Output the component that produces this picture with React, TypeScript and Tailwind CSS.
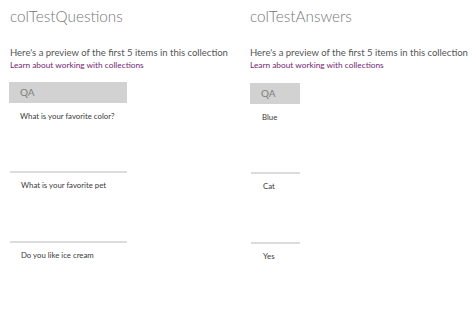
import React from "react";

const font = { fontFamily: 'Lato, "Noto Sans", sans-serif' };

function Gallery({
  items,
  width,
  textPad,
}: {
  items: string[];
  width: string;
  textPad: string;
}) {
  return (
    <div className={`flex flex-col shrink-0 ${width}`}>
      <div className="shrink-0 h-[21px] bg-[#d2d2d2] flex items-center pl-[11px] text-[10px] text-[#7f7f7f]">
        QA
      </div>
      {items.map((t, i) => (
        <div
          key={i}
          className={`shrink-0 whitespace-nowrap ${i === 0 ? "h-[68px] pt-[6px]" : "h-[70px] pt-[5px] border-t-2 border-[#dcdcdc] ml-[1px]"} ${textPad} text-[7.8px] leading-[14px] text-[#3a3a3a]`}
        >
          {t}
        </div>
      ))}
    </div>
  );
}

function Column({
  title,
  items,
  width,
  textPad,
  galleryPad,
}: {
  title: string;
  items: string[];
  width: string;
  textPad: string;
  galleryPad: string;
}) {
  return (
    <div className="flex flex-col">
      <div className="shrink-0 pt-[5px] h-[46px] text-[15.3px] leading-[22px] text-[#777777] font-light whitespace-nowrap">
        {title}
      </div>
      <div className="shrink-0 text-[9.5px] leading-[13px] text-[#555555] whitespace-nowrap">
        Here&apos;s a preview of the first 5 items in this collection
      </div>
      <div className="shrink-0 text-[8.3px] leading-[13px] text-[#742774] whitespace-nowrap">
        Learn about working with collections
      </div>
      <div className={`shrink-0 ${galleryPad}`}>
        <Gallery items={items} width={width} textPad={textPad} />
      </div>
    </div>
  );
}

export default function App() {
  return (
    <div className="w-[474px] h-[311px] bg-white flex overflow-hidden" style={font}>
      <div className="w-[240px] shrink-0 pl-[10px]">
        <Column
          title="colTestQuestions"
          items={["What is your favorite color?", "What is your favorite pet", "Do you like ice cream"]}
          width="w-[118px] -ml-[1px]"
          textPad="pl-[11px]"
          galleryPad="pt-[10px]"
        />
      </div>
      <div className="flex-1 pl-[10px]">
        <Column
          title="colTestAnswers"
          items={["Blue", "Cat", "Yes"]}
          width="w-[50px]"
          textPad="pl-[12px]"
          galleryPad="pt-[11px]"
        />
      </div>
    </div>
  );
}
